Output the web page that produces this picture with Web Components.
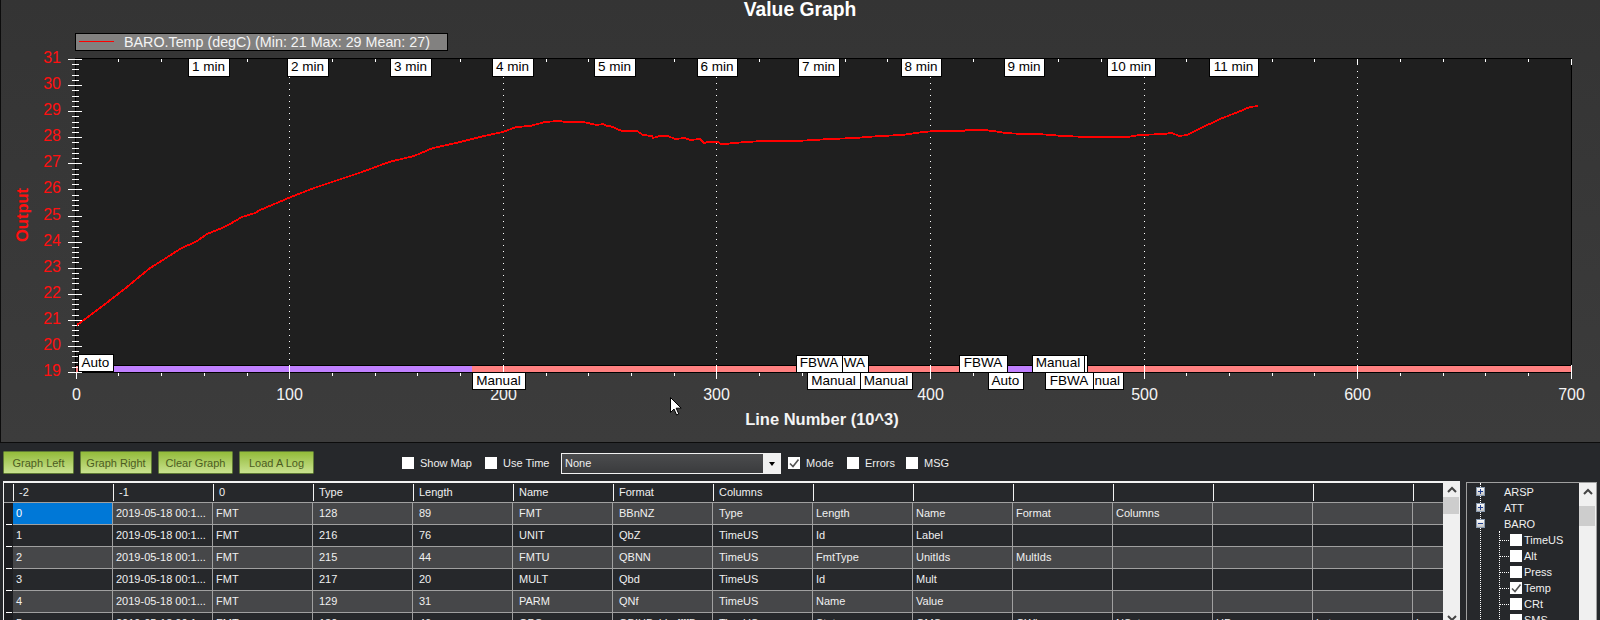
<!DOCTYPE html>
<html>
<head>
<meta charset="utf-8">
<title>Value Graph</title>
<style>
html,body{margin:0;padding:0;height:620px;overflow:hidden;background:#26282b;}
body{font-family:"Liberation Sans",Arial,sans-serif;font-size:11px;color:#eee;}
</style>
</head>
<body>
<value-graph></value-graph>
<graph-toolbar></graph-toolbar>
<log-browser></log-browser>

<template id="graph-tpl">
<style>
:host{display:block;height:442px;border-bottom:1px solid #0c0c0c;border-left:1px solid #0c0c0c;
  box-sizing:content-box;background:linear-gradient(#343434,#3c3c3c);overflow:hidden;}
svg{display:block;font-family:"Liberation Sans",Arial,sans-serif;}
</style>
<svg id="g" width="1599" height="442" viewBox="1 0 1599 442"></svg>
</template>

<template id="toolbar-tpl">
<style>
:host{display:flex;align-items:center;height:38px;padding:1px 0 0 3px;box-sizing:border-box;}
.btns{display:flex;gap:6px;}
.opts{display:flex;align-items:center;margin-left:88px;}
</style>
<div class="btns"><slot name="btn"></slot></div>
<div class="opts"><slot name="opt"></slot></div>
</template>

<template id="btn-tpl">
<style>
:host{display:flex;align-items:center;justify-content:center;height:23px;box-sizing:border-box;
  border:1px solid #5f7a35;border-radius:1px;background:linear-gradient(#93bb3a,#c9e28f);
  color:#4c5c22;font:11px "Liberation Sans",Arial,sans-serif;}
</style>
<slot></slot>
</template>

<template id="check-tpl">
<style>
:host{display:inline-flex;align-items:center;font:11px "Liberation Sans",Arial,sans-serif;color:#eee;}
.box{width:12px;height:12px;background:#fff;flex:none;display:block;}
svg{display:block;}
span{margin-left:6px;}
</style>
<div class="box"></div><span><slot></slot></span>
</template>

<template id="combo-tpl">
<style>
:host{display:flex;width:220px;height:21px;box-sizing:border-box;border:1px solid #f2f2f2;margin-top:2px;
  font:11px "Liberation Sans",Arial,sans-serif;color:#eee;background:linear-gradient(#4b4c4e,#3a3b3d);}
.txt{flex:1;line-height:19px;padding-left:3px;}
.btn{width:17px;background:#f0f0f0;display:flex;align-items:center;justify-content:center;}
.arr{width:0;height:0;border:3px solid transparent;border-top:4px solid #000;border-bottom:0;}
</style>
<div class="txt"><slot></slot></div><div class="btn"><div class="arr"></div></div>
</template>

<template id="browser-tpl">
<style>
:host{display:flex;padding-left:3px;height:139px;overflow:hidden;}
.gap{width:6px;flex:none;}
</style>
<slot name="grid"></slot><div class="gap"></div><slot name="tree"></slot>
</template>

<template id="grid-tpl">
<style>
:host{display:flex;width:1457px;height:139px;flex:none;overflow:hidden;font:11px "Liberation Sans",Arial,sans-serif;color:#f0f0f0;}
.main{width:1440px;flex:none;border-top:2px solid #f2f2f2;border-left:1px solid #f2f2f2;box-sizing:border-box;overflow:hidden;height:139px;}
.row{display:grid;grid-template-columns:9px repeat(15,100px);height:22px;}
.row.head{height:20px;}
.row.alt{background:#464749;}
.c{border-right:1px solid #a0a0a0;border-bottom:1px solid #a0a0a0;box-sizing:border-box;line-height:21px;padding-left:3px;white-space:nowrap;overflow:hidden;}
.c.p{padding-left:6px;}
.head .c{border-right:0;border-bottom:0;border-left:1px solid #f2f2f2;margin-top:1px;line-height:17px;padding-left:5px;height:17px;}
.row.head{border-bottom:1px solid #a0a0a0;box-sizing:border-box;}
.rh{background:#1c1d20;position:relative;padding:0;border:0;overflow:visible;}
.rh::after{content:"";position:absolute;left:2px;right:1px;bottom:-1px;height:2px;background:#fff;}
.head .rh{border:0;background:none;margin:0;height:19px;}.head .rh::after{display:none;}
.sel{background:#0078d7;color:#fff;}
</style>
<div class="main" id="m"></div>
<scroll-bar thumb="16" thumbh="17" down style="height:139px"></scroll-bar>
</template>

<template id="scroll-tpl">
<style>
:host{display:block;width:17px;flex:none;background:#f0f0f0;position:relative;box-sizing:border-box;}
.thumb{position:absolute;left:0;right:1px;background:#cdcdcd;}
svg{position:absolute;left:4px;top:5px;}
svg.dn{top:134px;display:none;}
:host([down]) svg.dn{display:block;}
</style>
<svg width="10" height="7" viewBox="0 0 10 7"><path d="M1 6 5 2 9 6" fill="none" stroke="#444" stroke-width="2"/></svg>
<div class="thumb"></div>
<svg class="dn" width="10" height="7" viewBox="0 0 10 7"><path d="M1 1 5 5 9 1" fill="none" stroke="#444" stroke-width="2"/></svg>
</template>

<template id="tree-tpl">
<style>
:host{display:block;width:131px;height:139px;flex:none;border:1px solid #a0a0a0;border-bottom:0;box-sizing:border-box;
  margin-top:1px;position:relative;overflow:hidden;font:11px "Liberation Sans",Arial,sans-serif;color:#f0f0f0;}
.list{margin-right:18px;height:100%;padding-top:1px;box-sizing:border-box;position:relative;overflow:hidden;}
.sb{position:absolute;top:0;right:0;height:100%;}
.vline{position:absolute;width:0;border-left:1px dotted #fff;}
</style>
<div class="list">
  <div class="vline" style="left:13px;top:0;bottom:0"></div>
  <div class="vline" style="left:32px;top:48px;bottom:0"></div>
  <slot></slot>
</div>
<scroll-bar class="sb" thumb="23" thumbh="20"></scroll-bar>
</template>

<template id="tree-item-tpl">
<style>
:host{display:flex;align-items:center;height:16px;position:relative;}
.exp{position:absolute;left:9px;top:3px;width:9px;height:9px;box-sizing:border-box;border:1px solid #8a9bb0;background:linear-gradient(#fff,#c4c4c4);}
.exp::before,.exp.plus::after{content:"";position:absolute;background:#1f3f8f;}
.exp::before{left:1px;right:1px;top:3px;height:1px;}
.exp.plus::after{top:1px;bottom:1px;left:3px;width:1px;}
.name{margin-left:37px;}
.dash{position:absolute;left:33px;top:8px;width:9px;border-top:1px dotted #fff;}
.cb{position:absolute;left:43px;top:2px;width:12px;height:12px;background:#fff;}
.cb svg{display:block;}
:host([child]) .name{margin-left:57px;}
</style>
<div id="x"></div>
<span class="name"><slot></slot></span>
</template>

<script>
// plot geometry, measured off the reference
const PL = 76, PT = 59, PR = 1571, PB = 372;
const xv = v => 75.7 + v * 2.1357;
const yv = v => PB - (v - 19) * (PB - PT) / 12;

const curve = "77,325 100,308 127,287 150,268 163,260 180,249 197,241 207,234 222,228 230,224 242,217 255,213 260,210 291,197 314,188 338,180 362,172 389,162 414,156 433,148 456,143 484,136 503,132 516,127 530,126 545,122 558,121 567,122 583,122 597,125 603,124 607,126 610,126 622,131 637,131 643,135 652,136 653,138 660,136 668,136 675,139 685,138 690,140 700,139 704,143 708,142 718,142 721,144 727,144 733,143 747,142 763,141 797,141 830,139 855,138 880,136 902,135 923,132 935,131 963,131 967,130 985,130 1000,132 1005,133 1023,134 1038,134 1063,136 1088,137 1127,137 1140,135 1163,134 1172,133 1179,136 1187,135 1197,130 1220,119 1238,112 1250,107 1258,106";

const topLabels = [["1 min",188,41],["2 min",287,41],["3 min",390,41],["4 min",492,41],["5 min",594,41],["6 min",697,40],["7 min",798,41],["8 min",901,40],["9 min",1004,40],["10 min",1107,48],["11 min",1209,49]];
// order matters, later ones cover earlier ones like in the plot
const modeLabels = [
  ["Auto",78,354,35],["Manual",472,372,53],
  ["WA",842,355,26],["FBWA",796,355,46],["Manual",860,372,52],["Manual",807,372,53],
  ["FBWA",959,355,48],["Auto",988,372,35],
  ["",1045,355,42],["Manual",1032,355,52],["nual",1092,372,31],["FBWA",1045,372,48]
];

function label(t, x, y, w, h) {
  const anchor = t == "WA" || t == "nual" ? "end" : "middle";
  const tx = anchor == "end" ? x + w - 3 : x + w / 2;
  const base = y + (y == 355 ? 12 : 13);
  return `<rect x="${x + .5}" y="${y + .5}" width="${w}" height="${h}" fill="#fff" stroke="#000"/>` +
    `<text x="${tx}" y="${base}" text-anchor="${anchor}" font-size="13.5" fill="#000">${t}</text>`;
}

class ValueGraph extends HTMLElement {
  connectedCallback() {
    const root = this.attachShadow({ mode: "open" });
    root.appendChild(document.getElementById("graph-tpl").content.cloneNode(true));
    let s = "";
    s += `<text x="800" y="16" text-anchor="middle" font-size="19.3" font-weight="bold" fill="#fff">Value Graph</text>`;
    // legend
    s += `<rect x="75.5" y="33.5" width="372" height="17" fill="#828180" stroke="#000"/>`;
    s += `<line x1="79" x2="114" y1="41.5" y2="41.5" stroke="#f00"/>`;
    s += `<text x="124" y="47" font-size="14.3" fill="#f4f4f4">BARO.Temp (degC) (Min: 21 Max: 29 Mean: 27)</text>`;
    // plot area
    s += `<rect x="${PL}" y="${PT}" width="${PR - PL}" height="${PB - PT}" fill="#1f1f1f"/>`;
    for (let v = 100; v < 700; v += 100)
      s += `<line x1="${Math.round(xv(v)) + .5}" x2="${Math.round(xv(v)) + .5}" y1="71" y2="${PB}" stroke="#fff" stroke-dasharray="1 5"/>`;
    // mode bar
    s += `<rect x="${PL}" y="366" width="${PR - PL}" height="6" fill="#ff8080"/>`;
    s += `<rect x="80" y="366" width="392" height="6" fill="#c080ff"/>`;
    s += `<rect x="1006" y="366" width="26" height="6" fill="#c080ff"/>`;
    s += `<line x1="${PL}" x2="${PR}" y1="365.5" y2="365.5" stroke="#000"/>`;
    // frame
    s += `<rect x="${PL - .5}" y="${PT - .5}" width="${PR - PL + 1}" height="${PB - PT + 1}" fill="none" stroke="#000"/>`;
    // x ticks
    for (let v = 0; v <= 700; v += 20) {
      const x = Math.round(xv(v)) + .5;
      if (v % 100 == 0) {
        s += `<line x1="${x}" x2="${x}" y1="${v ? 365 : PB}" y2="${PB + 7}" stroke="#fff"/>`;
        if (v) s += `<line x1="${x}" x2="${x}" y1="${PT}" y2="${PT + 6}" stroke="#fff"/>`;
        s += `<text x="${x}" y="400" text-anchor="middle" font-size="16" fill="#f4f4f4">${v}</text>`;
      } else {
        s += `<line x1="${x}" x2="${x}" y1="${PT}" y2="${PT + 3}" stroke="#fff"/>`;
        s += `<line x1="${x}" x2="${x}" y1="${PB + 1}" y2="${PB + 4}" stroke="#fff"/>`;
      }
    }
    // y ticks and labels
    for (let v = 19; v <= 31; v += .2) {
      const r = Math.round(v * 5) / 5, y = Math.round(yv(r)) + .5;
      if (Number.isInteger(r)) {
        s += `<line x1="68" x2="82" y1="${y}" y2="${y}" stroke="#fff"/>`;
        s += `<text x="61" y="${y + 3.5}" text-anchor="end" font-size="16" fill="#ff1010">${r}</text>`;
      } else {
        s += `<line x1="72" x2="79" y1="${y}" y2="${y}" stroke="#fff"/>`;
      }
    }
    s += `<text transform="translate(28 215) rotate(-90)" text-anchor="middle" font-size="16.5" font-weight="bold" fill="#ff1010">Output</text>`;
    s += `<text x="822" y="425" text-anchor="middle" font-size="16.5" font-weight="bold" fill="#f4f4f4">Line Number (10^3)</text>`;
    s += `<polyline points="${curve}" fill="none" stroke="#f00" stroke-width="1.8" shape-rendering="crispEdges"/>`;
    for (const [t, x, w] of topLabels) s += label(t, x, PT - 1, w, 18);
    for (const [t, x, y, w] of modeLabels) s += label(t, x, y, w, 17);
    // mouse pointer
    s += `<path d="M670.5 397.5v15l3.5-3.5 2.6 6 2.2-1-2.6-5.8h5z" fill="#fff" stroke="#000"/>`;
    root.getElementById("g").innerHTML = s;
  }
}

class GraphToolbar extends HTMLElement {
  connectedCallback() {
    const root = this.attachShadow({ mode: "open" });
    root.appendChild(document.getElementById("toolbar-tpl").content.cloneNode(true));
    this.innerHTML = `
      <graph-button slot="btn" style="width:71px">Graph Left</graph-button>
      <graph-button slot="btn" style="width:72px">Graph Right</graph-button>
      <graph-button slot="btn" style="width:75px">Clear Graph</graph-button>
      <graph-button slot="btn" style="width:75px">Load A Log</graph-button>
      <dark-check slot="opt" style="width:83px">Show Map</dark-check>
      <dark-check slot="opt" style="width:76px">Use Time</dark-check>
      <dark-combo slot="opt" style="margin-right:7px">None</dark-combo>
      <dark-check slot="opt" checked style="width:59px">Mode</dark-check>
      <dark-check slot="opt" style="width:59px">Errors</dark-check>
      <dark-check slot="opt">MSG</dark-check>`;
  }
}

class GraphButton extends HTMLElement {
  connectedCallback() {
    this.attachShadow({ mode: "open" }).appendChild(document.getElementById("btn-tpl").content.cloneNode(true));
  }
}

const tick = `<svg width="12" height="12" viewBox="0 0 12 12"><path d="M2 6.5 5 9.5 10.5 2.5" fill="none" stroke="#555" stroke-width="1.6"/></svg>`;

class DarkCheck extends HTMLElement {
  connectedCallback() {
    const root = this.attachShadow({ mode: "open" });
    root.appendChild(document.getElementById("check-tpl").content.cloneNode(true));
    if (this.hasAttribute("checked")) root.querySelector(".box").innerHTML = tick;
  }
}

class DarkCombo extends HTMLElement {
  connectedCallback() {
    this.attachShadow({ mode: "open" }).appendChild(document.getElementById("combo-tpl").content.cloneNode(true));
  }
}

class LogBrowser extends HTMLElement {
  connectedCallback() {
    const root = this.attachShadow({ mode: "open" });
    root.appendChild(document.getElementById("browser-tpl").content.cloneNode(true));
    this.innerHTML = `
      <log-grid slot="grid"></log-grid>
      <log-tree slot="tree">
        <log-item kind="plus">ARSP</log-item>
        <log-item kind="plus">ATT</log-item>
        <log-item kind="minus">BARO</log-item>
        <log-item child>TimeUS</log-item>
        <log-item child>Alt</log-item>
        <log-item child>Press</log-item>
        <log-item child checked>Temp</log-item>
        <log-item child>CRt</log-item>
        <log-item child>SMS</log-item>
      </log-tree>`;
  }
}

const rows = [
  ["0","2019-05-18 00:1...","FMT","128","89","FMT","BBnNZ","Type","Length","Name","Format","Columns"],
  ["1","2019-05-18 00:1...","FMT","216","76","UNIT","QbZ","TimeUS","Id","Label"],
  ["2","2019-05-18 00:1...","FMT","215","44","FMTU","QBNN","TimeUS","FmtType","UnitIds","MultIds"],
  ["3","2019-05-18 00:1...","FMT","217","20","MULT","Qbd","TimeUS","Id","Mult"],
  ["4","2019-05-18 00:1...","FMT","129","31","PARM","QNf","TimeUS","Name","Value"],
  ["5","2019-05-18 00:1...","FMT","130","46","GPS","QBIHBcLLeffffB","TimeUS","Status","GMS","GWk","NSats","HDop","Lat","Lng"]
];
const heads = ["-2","-1","0","Type","Length","Name","Format","Columns"];

class LogGrid extends HTMLElement {
  connectedCallback() {
    const root = this.attachShadow({ mode: "open" });
    root.appendChild(document.getElementById("grid-tpl").content.cloneNode(true));
    let h = `<div class="row head"><div class="c rh"></div>`;
    for (let i = 0; i < 15; i++) h += `<div class="c">${heads[i] || ""}</div>`;
    h += `</div>`;
    rows.forEach((r, n) => {
      h += `<div class="row${n % 2 ? "" : " alt"}"><div class="c rh"></div>`;
      for (let i = 0; i < 15; i++) {
        const cls = "c" + (i >= 3 && i <= 7 ? " p" : "") + (n == 0 && i == 0 ? " sel" : "");
        h += `<div class="${cls}">${r[i] || ""}</div>`;
      }
      h += `</div>`;
    });
    root.getElementById("m").innerHTML = h;
  }
}

class ScrollBar extends HTMLElement {
  connectedCallback() {
    const root = this.attachShadow({ mode: "open" });
    root.appendChild(document.getElementById("scroll-tpl").content.cloneNode(true));
    const t = root.querySelector(".thumb");
    t.style.top = this.getAttribute("thumb") + "px";
    t.style.height = this.getAttribute("thumbh") + "px";
  }
}

class LogTree extends HTMLElement {
  connectedCallback() {
    this.attachShadow({ mode: "open" }).appendChild(document.getElementById("tree-tpl").content.cloneNode(true));
  }
}

class LogItem extends HTMLElement {
  connectedCallback() {
    const root = this.attachShadow({ mode: "open" });
    root.appendChild(document.getElementById("tree-item-tpl").content.cloneNode(true));
    const kind = this.getAttribute("kind"), x = root.getElementById("x");
    if (kind) x.className = "exp " + kind;
    else x.innerHTML = `<div class="dash"></div><div class="cb">${this.hasAttribute("checked") ? tick : ""}</div>`;
  }
}

customElements.define("value-graph", ValueGraph);
customElements.define("graph-toolbar", GraphToolbar);
customElements.define("graph-button", GraphButton);
customElements.define("dark-check", DarkCheck);
customElements.define("dark-combo", DarkCombo);
customElements.define("log-browser", LogBrowser);
customElements.define("log-grid", LogGrid);
customElements.define("scroll-bar", ScrollBar);
customElements.define("log-tree", LogTree);
customElements.define("log-item", LogItem);
</script>
</body>
</html>
